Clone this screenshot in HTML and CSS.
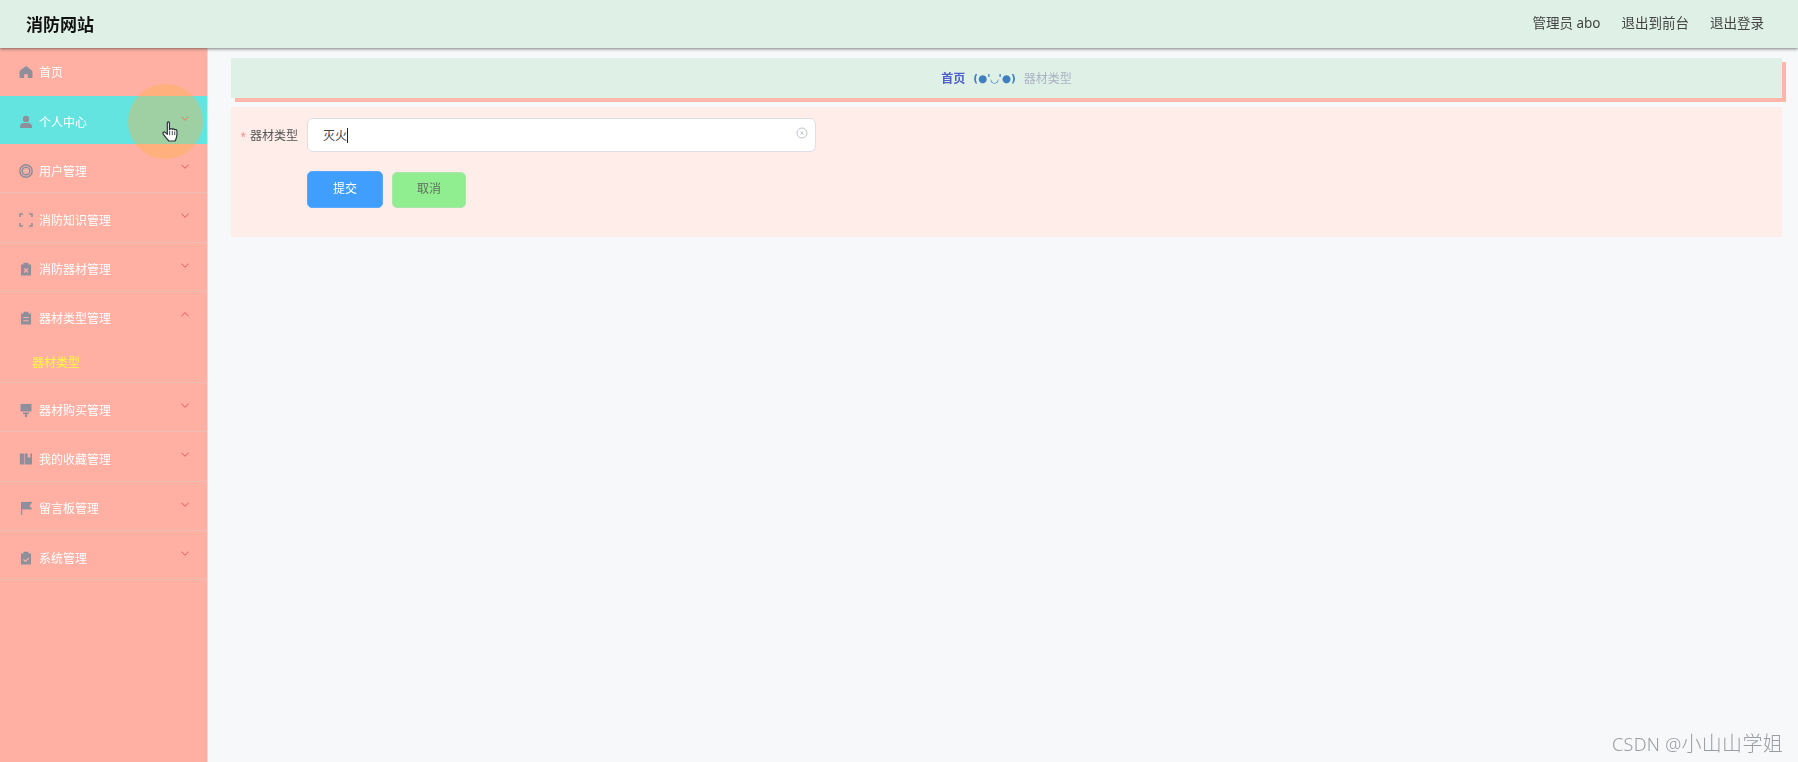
FILE: index.html
```html
<!DOCTYPE html>
<html lang="zh">
<head>
<meta charset="utf-8">
<title>消防网站</title>
<link rel="stylesheet" href="styles.css">
</head>
<body>
<div class="app">
  <header class="topbar">
    <div class="brand">消防网站</div>
    <nav class="top-links">
      <span>管理员 abo</span>
      <span>退出到前台</span>
      <span>退出登录</span>
    </nav>
  </header>
  <div class="body-row">
    <aside class="sidebar">
      <div class="item item-first">
        <svg class="ico" viewBox="0 0 14 14"><path d="M7 1 1 5.500C.6 5.900.5 6.300.5 7v6h4.700V9.300h3.600V13h4.700V7c0-.7-.1-1.100-.5-1.500z" fill="currentColor"/></svg>
        <span>首页</span>
      </div>
      <div class="item item-active">
        <svg class="ico" viewBox="0 0 14 14"><circle cx="7" cy="4" r="3.200" fill="currentColor"/><path d="M1 13v-1.600C1 9.200 3 8 5 8h4c2 0 4 1.200 4 3.400V13z" fill="currentColor"/></svg>
        <span>个人中心</span>
        <svg class="arrow" viewBox="0 0 8 5"><path d="M.4.6 4 4.300 7.600.6" /></svg>
      </div>
      <div class="item">
        <svg class="ico" viewBox="0 0 14 14"><circle cx="7" cy="7" r="6.200" class="ring"/><circle cx="7" cy="7" r="3.800" class="ring"/></svg>
        <span>用户管理</span>
        <svg class="arrow" viewBox="0 0 8 5"><path d="M.4.6 4 4.300 7.600.6" /></svg>
      </div>
      <div class="item">
        <svg class="ico" viewBox="0 0 14 14"><path d="M1 4V1h3M10 1h3v3M13 10v3h-3M4 13H1v-3" class="ring"/></svg>
        <span>消防知识管理</span>
        <svg class="arrow" viewBox="0 0 8 5"><path d="M.4.6 4 4.300 7.600.6" /></svg>
      </div>
      <div class="item">
        <svg class="ico" viewBox="0 0 14 14"><path d="M2 2.500h2.500V.8h5v1.700H12V13.500H2z" fill="currentColor"/><path d="M5 6.500l4 4M9 6.500l-4 4" class="cut"/></svg>
        <span>消防器材管理</span>
        <svg class="arrow" viewBox="0 0 8 5"><path d="M.4.6 4 4.300 7.600.6" /></svg>
      </div>
      <div class="item item-open">
        <svg class="ico" viewBox="0 0 14 14"><path d="M2 2.500h2.500V.8h5v1.700H12V13.500H2z" fill="currentColor"/><path d="M4.300 6.500h5.400M4.300 9.800h5.400" class="cut"/></svg>
        <span>器材类型管理</span>
        <svg class="arrow" viewBox="0 0 8 5"><path d="M.4 4.300 4 .6l3.600 3.700" /></svg>
      </div>
      <div class="subitem">器材类型</div>
      <div class="item">
        <svg class="ico" viewBox="0 0 14 14"><path d="M1.500 1h11v7.500h-11zM4 9.500h6V11H8v3H6v-3H4z" fill="currentColor"/></svg>
        <span>器材购买管理</span>
        <svg class="arrow" viewBox="0 0 8 5"><path d="M.4.6 4 4.300 7.600.6" /></svg>
      </div>
      <div class="item">
        <svg class="ico" viewBox="0 0 14 14"><path d="M.8 1.500h4.400v11H.8zM5.800 1.500H13v11H5.800zM8.800 1.500v4.500l1.300-1 1.300 1V1.500z" fill="currentColor" fill-rule="evenodd"/></svg>
        <span>我的收藏管理</span>
        <svg class="arrow" viewBox="0 0 8 5"><path d="M.4.6 4 4.300 7.600.6" /></svg>
      </div>
      <div class="item">
        <svg class="ico" viewBox="0 0 14 14"><path d="M2 1h11.500L10.500 4.800l3 3.700H3.200V14H2z" fill="currentColor"/></svg>
        <span>留言板管理</span>
        <svg class="arrow" viewBox="0 0 8 5"><path d="M.4.6 4 4.300 7.600.6" /></svg>
      </div>
      <div class="item">
        <svg class="ico" viewBox="0 0 14 14"><path d="M2 2.500h2.500V.8h5v1.700H12V13.500H2z" fill="currentColor"/><path d="M4.500 8.500l2 2 3.300-3.500" class="cut"/></svg>
        <span>系统管理</span>
        <svg class="arrow" viewBox="0 0 8 5"><path d="M.4.6 4 4.300 7.600.6" /></svg>
      </div>
    </aside>
    <main class="content">
      <div class="crumbs">
        <b class="crumb-home">首页</b>
        <span class="crumb-face">(●'◡'●)</span>
        <span class="crumb-last">器材类型</span>
      </div>
      <form class="panel">
        <div class="field">
          <label class="field-label"><i class="req">*</i>器材类型</label>
          <div class="input">
            <span class="input-text">灭火</span><span class="caret"></span>
            <svg class="clear" viewBox="0 0 12 12"><circle cx="6" cy="6" r="5" /><path d="M4.500 4.500l3 3M7.500 4.500l-3 3"/></svg>
          </div>
        </div>
        <div class="actions">
          <button type="button" class="btn btn-submit">提交</button>
          <button type="button" class="btn btn-cancel">取消</button>
        </div>
      </form>
    </main>
  </div>
</div>
<div class="click-ring"></div>
<svg class="hand" viewBox="0 0 16 21">
  <path d="M5 1.500c0-1.300 2-1.300 2 0V8l.5-.5c.3-1 2-1 2.200.2.400-.9 2-.8 2.200.4.500-.7 2-.4 2.100.8.200 2.200.1 4.500-.4 6.300-.3 1.300-.8 2.300-1.300 3.300H6.500C5.200 17.200 3 14.600 1.200 12c-.9-1.300.6-2.700 1.800-1.600L5 12.200z" fill="#fff" stroke="#2a3038" stroke-width="1.100" stroke-linejoin="round"/>
  <path d="M7.200 9v4M9.700 9v4M12 9.500V13" fill="none" stroke="#2a3038" stroke-width=".8"/>
</svg>
<div class="watermark">CSDN @<span class="watermark-cjk">小山山学姐</span></div>
</body>
</html>
```
FILE: styles.css
```css
* { box-sizing: border-box; }
html, body {
  margin: 0;
  height: 100%;
  overflow: hidden;
}
body {
  font-family: "Noto Sans", "Noto Sans CJK SC", sans-serif;
  font-size: 12px;
  background: #f6f8f9;
  color: #444;
}
.app {
  display: flex;
  flex-direction: column;
  height: 100vh;
  filter: blur(.35px);
}
.topbar {
  flex: none;
  height: 48px;
  display: flex;
  align-items: center;
  justify-content: space-between;
  padding: 0 34px 2px 26px;
  background: #dff0e7;
  box-shadow: 0 1px 3px rgba(40, 50, 50, .6);
  position: relative;
  z-index: 2;
}
.brand {
  font-size: 17px;
  font-weight: 700;
  color: #111;
}
.top-links {
  display: flex;
  gap: 21px;
  padding-bottom: 2px;
  font-size: 13.500px;
  color: #444;
}
.body-row {
  flex: 1;
  display: flex;
  min-height: 0;
}
.sidebar {
  flex: none;
  width: 208px;
  background: #ffb0a3;
  color: #fff;
  border-right: 1px solid #f3d5d0;
}
.item {
  height: 49.300px;
  display: flex;
  align-items: center;
  padding: 5px 0 0 19px;
  border-bottom: 1px solid #ecbdb6;
  position: relative;
  color: #fff;
}
.item-first {
  height: 48px;
  padding-top: 0;
  border-bottom: 0;
}
.item-active {
  height: 48px;
  padding-top: 3px;
  background: #64e4e0;
  border-bottom: 0;
}
.item-open {
  padding-top: 3px;
  border-bottom: 0;
}
.ico {
  width: 14px;
  height: 14px;
  margin-right: 6px;
  color: #8f8f9c;
  flex: none;
}
.ring {
  fill: none;
  stroke: currentColor;
  stroke-width: 1.500;
}
.cut {
  fill: none;
  stroke: #ffb0a3;
  stroke-width: 1.100;
}
.arrow {
  position: absolute;
  right: 18px;
  top: 20px;
  width: 8px;
  height: 5px;
  fill: none;
  stroke: #e8565a;
  stroke-width: 1;
}
.subitem {
  height: 42px;
  display: flex;
  align-items: center;
  padding-left: 32px;
  color: #fdfb3a;
  border-bottom: 1px solid #ecbdb6;
}
.content {
  flex: 1;
  min-width: 0;
  padding: 10px 16px 0 23px;
}
.crumbs {
  height: 40px;
  display: flex;
  align-items: center;
  justify-content: center;
  gap: 8px;
  background: #dff0e7;
  box-shadow: 4px 4px 0 #ffb5a9;
}
.crumb-home { color: #4f5fc8; font-weight: 700; }
.crumb-face { color: #3f7fc0; font-weight: 700; font-family: "DejaVu Sans", sans-serif; font-size: 10.500px; }
.crumb-last { color: #aab2c2; }
.panel {
  margin-top: 9px;
  height: 130px;
  padding-top: 11px;
  background: #ffede9;
  border-radius: 2px;
}
.field {
  display: flex;
  align-items: center;
}
.field-label {
  width: 76px;
  padding-right: 9px;
  text-align: right;
  color: #555;
}
.req {
  color: #f78f8f;
  font-style: normal;
  font-size: 10px;
  margin-right: 4px;
}
.input {
  width: 509px;
  height: 34px;
  display: flex;
  align-items: center;
  padding-left: 15px;
  background: #fff;
  border: 1px solid #dcdfe6;
  border-radius: 6px;
  position: relative;
  color: #444;
}
.caret {
  width: 1px;
  height: 15px;
  background: #222;
}
.clear {
  position: absolute;
  right: 7px;
  top: 8px;
  width: 12px;
  height: 12px;
  fill: none;
  stroke: #c0c4cc;
  stroke-width: 1;
}
.actions {
  display: flex;
  align-items: center;
  gap: 9px;
  margin: 19px 0 0 76px;
}
.btn {
  font: inherit;
  border-radius: 5px;
  padding: 0 0 3px;
}
.btn-submit {
  width: 76px;
  height: 37px;
  background: #409eff;
  border: 1px solid #5aa9f8;
  color: #fff;
}
.btn-cancel {
  width: 74px;
  height: 36px;
  background: #90ee90;
  border: 1px solid #a9e6a9;
  color: #5f6f5f;
}
.click-ring {
  position: absolute;
  left: 128px;
  top: 84px;
  width: 75px;
  height: 75px;
  border-radius: 50%;
  background: rgba(255, 176, 63, .38);
  z-index: 5;
}
.hand {
  position: absolute;
  left: 162px;
  top: 121px;
  width: 17px;
  height: 23px;
  z-index: 6;
}
.watermark {
  position: absolute;
  right: 15px;
  bottom: 5px;
  font-size: 18px;
  font-weight: 300;
  letter-spacing: .3px;
  color: #9a9da1;
  z-index: 6;
}
.watermark-cjk { font-size: 20px; }
```
